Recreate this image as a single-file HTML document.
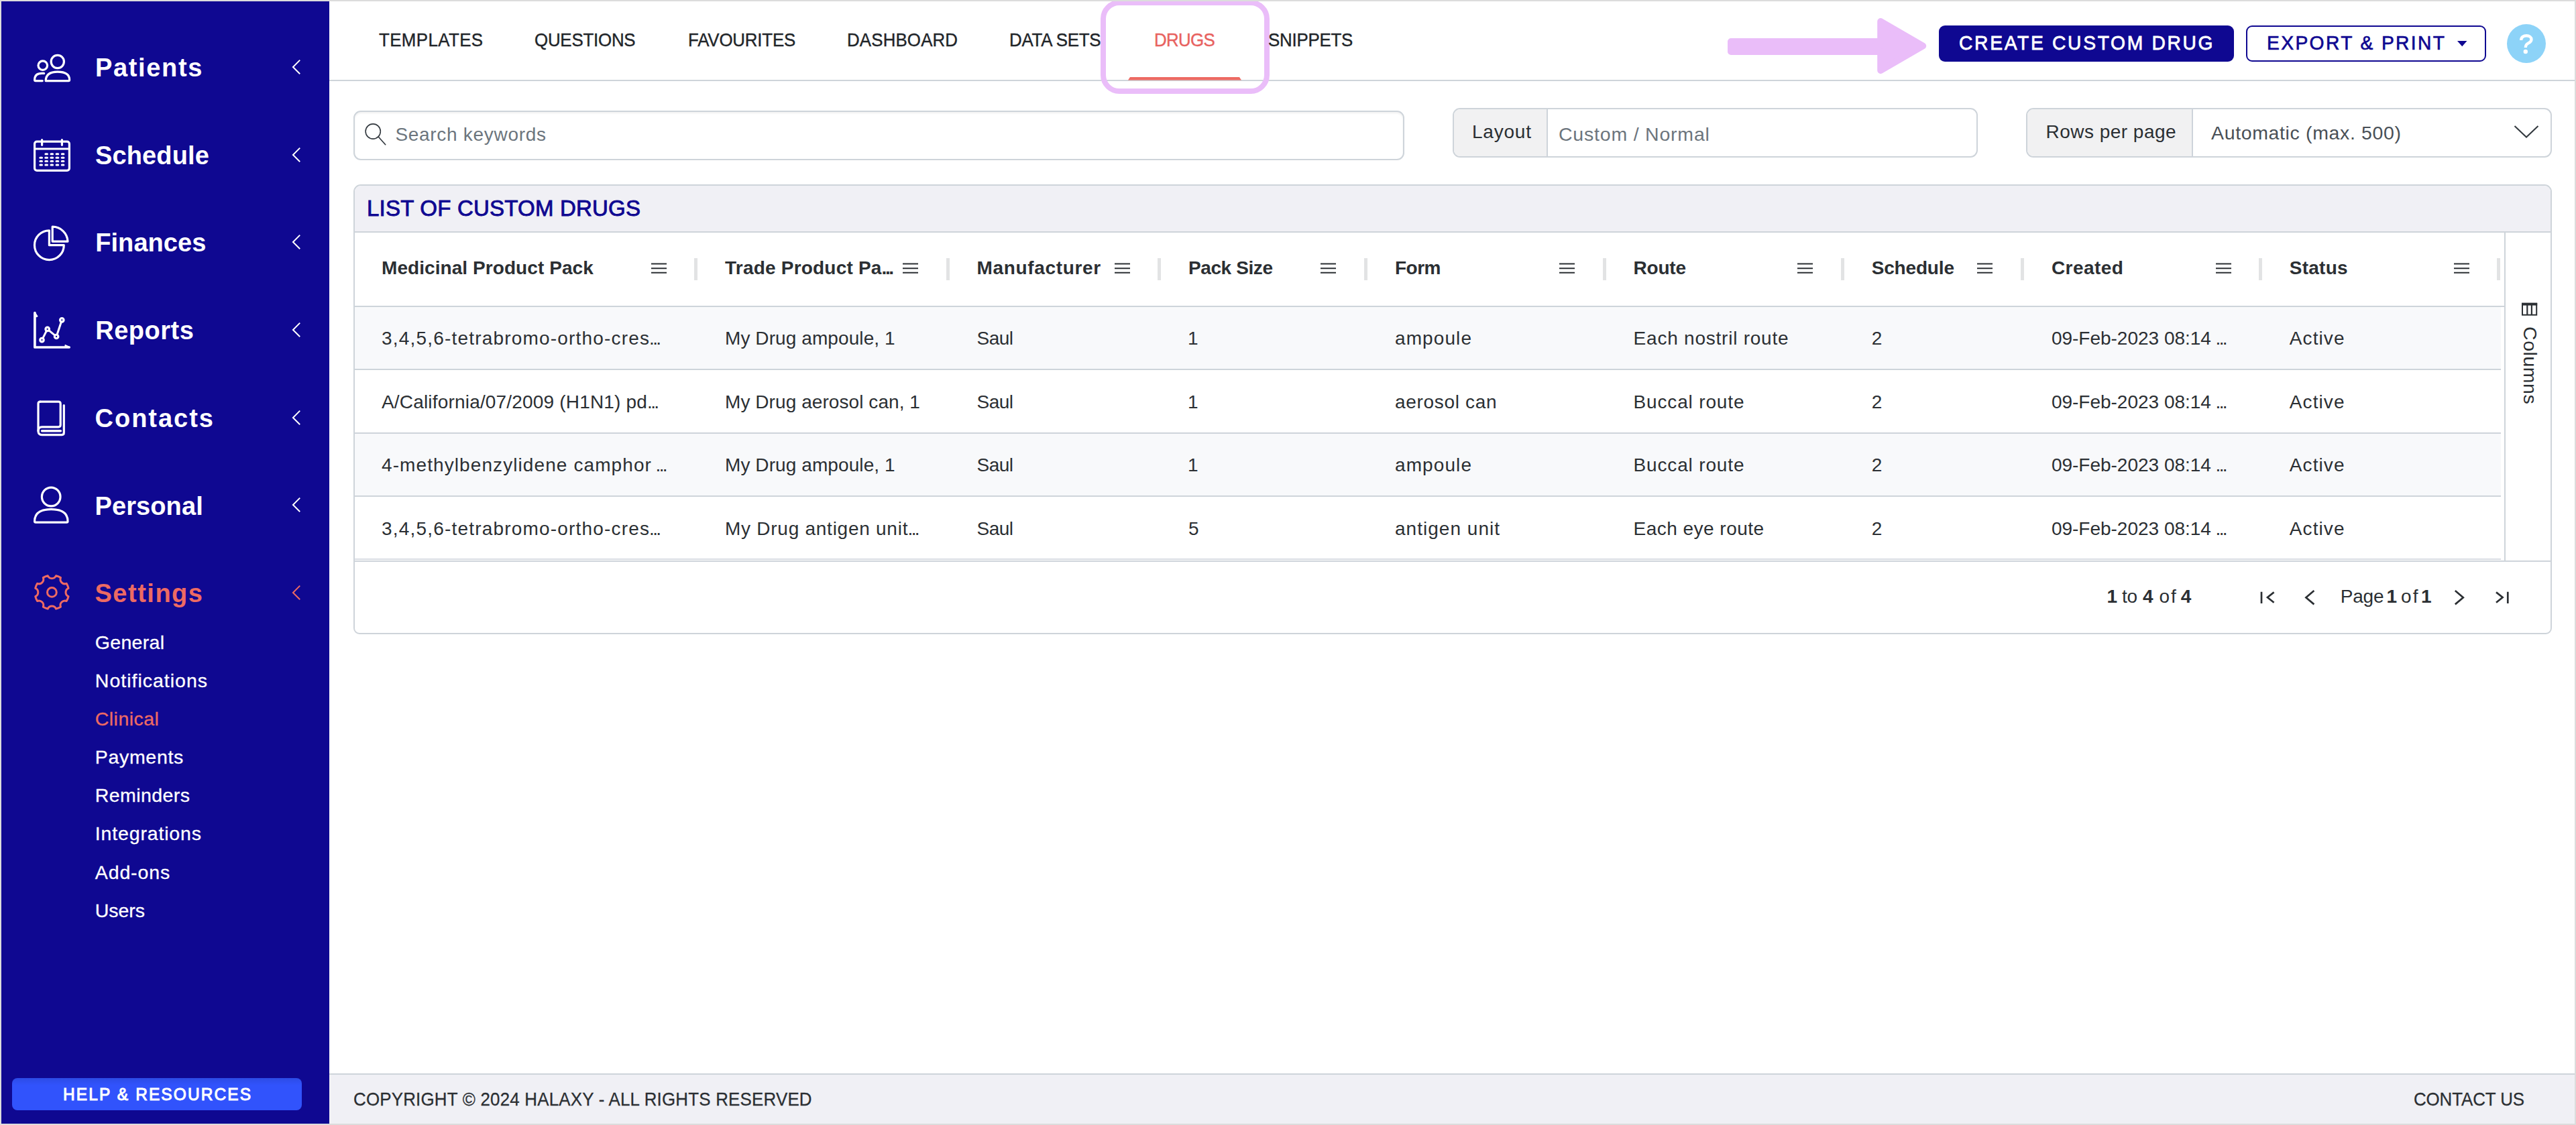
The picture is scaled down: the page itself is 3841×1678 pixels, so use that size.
<!DOCTYPE html>
<html><head><meta charset="utf-8"><title>Custom Drugs</title><style>html,body{margin:0;padding:0}body{width:3841px;height:1678px;position:relative;overflow:hidden;background:#fff;font-family:"Liberation Sans",sans-serif}
.b{position:absolute;display:block}.t{position:absolute;white-space:pre;font-family:"Liberation Sans",sans-serif}</style></head><body>
<div class="b" style="left:0px;top:0px;width:491px;height:1678px;background:#0f0891"></div>
<div class="b" style="left:491px;top:119px;width:3350px;height:2px;background:#ced4da"></div>
<div class="b" style="left:1682px;top:115px;width:169px;height:4.5px;background:#ed6a63;clip-path:polygon(3px 0,166px 0,169px 100%,0 100%)"></div>
<div class="b" style="left:491px;top:1601px;width:3350px;height:77px;background:#f0f0f5;border-top:2px solid #ced4da;box-sizing:border-box"></div>
<div class="b" style="left:527px;top:165px;width:1567px;height:74px;border:2px solid #ced4da;border-radius:11px;box-sizing:border-box;background:#fff;box-shadow:inset 0 2px 3px rgba(0,0,0,0.06)"></div>
<svg class="b" style="left:540px;top:180px;" width="40" height="40" viewBox="0 0 40 40"><g transform="translate(-540,-180)"><circle cx="556.2" cy="196" r="11.1" fill="none" stroke="#343a40" stroke-width="1.6"/><path d="M564.2 204 L574.7 215.7" stroke="#343a40" stroke-width="1.7" stroke-linecap="round"/></g></svg>
<div class="b" style="left:2166px;top:161px;width:783px;height:74px;border:2px solid #ced4da;border-radius:11px;box-sizing:border-box;background:#fff;overflow:hidden"></div>
<div class="b" style="left:2168px;top:163px;width:140px;height:70px;background:#f1f1f2;border-right:2px solid #ced4da;border-radius:9px 0 0 9px;box-sizing:border-box"></div>
<div class="b" style="left:3021px;top:161px;width:784px;height:74px;border:2px solid #ced4da;border-radius:11px;box-sizing:border-box;background:#fff"></div>
<div class="b" style="left:3023px;top:163px;width:247px;height:70px;background:#f1f1f2;border-right:2px solid #ced4da;border-radius:9px 0 0 9px;box-sizing:border-box"></div>
<svg class="b" style="left:3745px;top:184px;" width="44" height="26" viewBox="0 0 44 26"><path d="M4.5 4 L22 20.5 L39.5 4" fill="none" stroke="#343a40" stroke-width="2.1" stroke-linecap="butt" stroke-linejoin="miter"/></svg>
<div class="b" style="left:527px;top:275px;width:3278px;height:671px;border:2px solid #ced4da;border-radius:11px 11px 9px 9px;box-sizing:border-box;background:#fff"></div>
<div class="b" style="left:529px;top:277px;width:3274px;height:68px;background:#f0f0f5;border-radius:9px 9px 0 0"></div>
<div class="b" style="left:529px;top:345px;width:3274px;height:2px;background:#ced4da"></div>
<div class="b" style="left:529px;top:456.5px;width:3200px;height:94.5px;background:#f8f9fb"></div>
<div class="b" style="left:529px;top:645.5px;width:3200px;height:94.5px;background:#f8f9fb"></div>
<div class="b" style="left:529px;top:455.5px;width:3205px;height:2px;background:#ced4da"></div>
<div class="b" style="left:529px;top:550px;width:3200px;height:2px;background:#ced4da"></div>
<div class="b" style="left:529px;top:644.5px;width:3200px;height:2px;background:#ced4da"></div>
<div class="b" style="left:529px;top:739px;width:3200px;height:2px;background:#ced4da"></div>
<div class="b" style="left:529px;top:833px;width:3200px;height:2px;background:#d9dde3"></div>
<div class="b" style="left:529px;top:835.7px;width:3274px;height:2px;background:#ced4da"></div>
<div class="b" style="left:1035px;top:385px;width:5px;height:33px;background:#e2e3e4"></div>
<div class="b" style="left:1411px;top:385px;width:5px;height:33px;background:#e2e3e4"></div>
<div class="b" style="left:1726px;top:385px;width:5px;height:33px;background:#e2e3e4"></div>
<div class="b" style="left:2034px;top:385px;width:5px;height:33px;background:#e2e3e4"></div>
<div class="b" style="left:2390px;top:385px;width:5px;height:33px;background:#e2e3e4"></div>
<div class="b" style="left:2745px;top:385px;width:5px;height:33px;background:#e2e3e4"></div>
<div class="b" style="left:3013px;top:385px;width:5px;height:33px;background:#e2e3e4"></div>
<div class="b" style="left:3368px;top:385px;width:5px;height:33px;background:#e2e3e4"></div>
<div class="b" style="left:3723px;top:385px;width:5px;height:33px;background:#e2e3e4"></div>
<svg class="b" style="left:970.9px;top:391px;" width="23" height="18" viewBox="0 0 23 18"><path d="M0 2.6H23M0 9.2H23M0 15.8H23" stroke="#2b2f33" stroke-width="2"/></svg>
<svg class="b" style="left:1346px;top:391px;" width="23" height="18" viewBox="0 0 23 18"><path d="M0 2.6H23M0 9.2H23M0 15.8H23" stroke="#2b2f33" stroke-width="2"/></svg>
<svg class="b" style="left:1661.5px;top:391px;" width="23" height="18" viewBox="0 0 23 18"><path d="M0 2.6H23M0 9.2H23M0 15.8H23" stroke="#2b2f33" stroke-width="2"/></svg>
<svg class="b" style="left:1969px;top:391px;" width="23" height="18" viewBox="0 0 23 18"><path d="M0 2.6H23M0 9.2H23M0 15.8H23" stroke="#2b2f33" stroke-width="2"/></svg>
<svg class="b" style="left:2325px;top:391px;" width="23" height="18" viewBox="0 0 23 18"><path d="M0 2.6H23M0 9.2H23M0 15.8H23" stroke="#2b2f33" stroke-width="2"/></svg>
<svg class="b" style="left:2680px;top:391px;" width="23" height="18" viewBox="0 0 23 18"><path d="M0 2.6H23M0 9.2H23M0 15.8H23" stroke="#2b2f33" stroke-width="2"/></svg>
<svg class="b" style="left:2948px;top:391px;" width="23" height="18" viewBox="0 0 23 18"><path d="M0 2.6H23M0 9.2H23M0 15.8H23" stroke="#2b2f33" stroke-width="2"/></svg>
<svg class="b" style="left:3303.7px;top:391px;" width="23" height="18" viewBox="0 0 23 18"><path d="M0 2.6H23M0 9.2H23M0 15.8H23" stroke="#2b2f33" stroke-width="2"/></svg>
<svg class="b" style="left:3659px;top:391px;" width="23" height="18" viewBox="0 0 23 18"><path d="M0 2.6H23M0 9.2H23M0 15.8H23" stroke="#2b2f33" stroke-width="2"/></svg>
<div class="b" style="left:3734px;top:347px;width:2px;height:490px;background:#ced4da"></div>
<svg class="b" style="left:3758px;top:449px;" width="28" height="24" viewBox="0 0 28 24"><rect x="3" y="4.2" width="21.2" height="16.5" fill="none" stroke="#2b2f33" stroke-width="2"/><path d="M2 4.6H25.2" stroke="#2b2f33" stroke-width="4"/><path d="M10.3 4V21M16.9 4V21" stroke="#2b2f33" stroke-width="2.2"/></svg>
<div class="t" style="left:3772.6px;top:486.5px;font-size:28.5px;line-height:28.5px;color:#2b2f33;transform-origin:0 0;transform:rotate(90deg) translate(0,-50%);letter-spacing:0.55px">Columns</div>
<svg class="b" style="left:3360px;top:870px;" width="400" height="44" viewBox="0 0 400 44"><g transform="translate(-3360,-870)"><path d="M3372 882.7V900M3390.6 883.4L3381 891L3390.6 898.8" fill="none" stroke="#2b2f33" stroke-width="2.7" stroke-linecap="butt" stroke-linejoin="miter"/><path d="M3450.4 881L3438.4 891.2L3450.4 901.4" fill="none" stroke="#2b2f33" stroke-width="2.7" stroke-linecap="butt" stroke-linejoin="miter"/><path d="M3660.8 881L3672.8 891.2L3660.8 901.4" fill="none" stroke="#2b2f33" stroke-width="2.7" stroke-linecap="butt" stroke-linejoin="miter"/><path d="M3722 883.4L3731.6 891L3722 898.8M3739.3 882.7V900" fill="none" stroke="#2b2f33" stroke-width="2.7" stroke-linecap="butt" stroke-linejoin="miter"/></g></svg>
<div class="b" style="left:2891px;top:38px;width:440px;height:54px;background:#0f0891;border-radius:9px"></div>
<div class="b" style="left:3349px;top:38px;width:358px;height:54px;border:2.5px solid #0f0891;border-radius:9px;box-sizing:border-box;background:#fff"></div>
<svg class="b" style="left:3664px;top:60.6px;" width="14.4" height="9" viewBox="0 0 14.4 9"><path d="M0 0H14.4L7.2 8.2Z" fill="#0f0891"/></svg>
<div class="b" style="left:3737.5px;top:36px;width:58px;height:58px;background:#8dd3f8;border-radius:50%"></div>
<svg class="b" style="left:3745px;top:40px;" width="44" height="50" viewBox="0 0 44 50"><g transform="translate(-3745,-40)"><path d="M3759.2 60C3759.2 55.2 3762.8 53.3 3767.2 53.3C3771.8 53.3 3774.5 55.7 3774.5 58.7C3774.5 61.4 3772.8 62.9 3770 64.4C3767 66 3765.8 67.2 3765.8 71" fill="none" stroke="#fff" stroke-width="4.4"/><circle cx="3765.8" cy="77" r="3.2" fill="#fff"/></g></svg>
<div class="b" style="left:1641px;top:0px;width:252px;height:140px;border:8px solid #eabdf9;border-radius:28px;box-sizing:border-box"></div>
<svg class="b" style="left:2560px;top:10px;" width="330" height="120" viewBox="0 0 330 120"><path transform="translate(-2560,-10)" d="M2581 62H2804.2V32L2867.2 68.5L2804.2 105V77H2581Z" fill="#eabdf9" stroke="#eabdf9" stroke-width="10" stroke-linejoin="round"/></svg>
<div class="b" style="left:18px;top:1608px;width:432px;height:48px;background:linear-gradient(#2c4be6,#3153fc 22%);border-radius:8px"></div>
<svg class="b" style="left:0px;top:0px;" width="140" height="940" viewBox="0 0 140 940"><circle cx="85.8" cy="92" r="9.6" fill="none" stroke="#fff" stroke-width="3.2" stroke-linecap="round" stroke-linejoin="round"/><path d="M68.2 120.6 Q68.2 107.1 85.9 107.1 Q103.6 107.1 103.6 119 Q103.6 120.6 102 120.6 Z" fill="none" stroke="#fff" stroke-width="3.2" stroke-linecap="round" stroke-linejoin="round"/><circle cx="63.8" cy="97.6" r="6.8" fill="none" stroke="#fff" stroke-width="3.2" stroke-linecap="round" stroke-linejoin="round"/><path d="M65.6 109.4 H62.5 Q51.6 109.4 51.6 119.2 Q51.6 120.6 53 120.6 H63.2" fill="none" stroke="#fff" stroke-width="3.2" stroke-linecap="round" stroke-linejoin="round"/><rect x="51.6" y="211.1" width="51.8" height="43.2" rx="3.4" fill="none" stroke="#fff" stroke-width="3.2" stroke-linecap="round" stroke-linejoin="round"/><path d="M51.6 222H103.4M62.6 208.5V216.3M92.4 208.5V216.3" fill="none" stroke="#fff" stroke-width="3.2" stroke-linecap="round" stroke-linejoin="round"/><rect x="66.4" y="228.3" width="5.6" height="3" rx="1.5" fill="#fff"/><rect x="74.5" y="228.3" width="5.6" height="3" rx="1.5" fill="#fff"/><rect x="82.6" y="228.3" width="5.6" height="3" rx="1.5" fill="#fff"/><rect x="90.8" y="228.3" width="5.6" height="3" rx="1.5" fill="#fff"/><rect x="58.4" y="233.8" width="5.6" height="3" rx="1.5" fill="#fff"/><rect x="66.4" y="233.8" width="5.6" height="3" rx="1.5" fill="#fff"/><rect x="74.5" y="233.8" width="5.6" height="3" rx="1.5" fill="#fff"/><rect x="82.6" y="233.8" width="5.6" height="3" rx="1.5" fill="#fff"/><rect x="90.8" y="233.8" width="5.6" height="3" rx="1.5" fill="#fff"/><rect x="58.4" y="239.1" width="5.6" height="3" rx="1.5" fill="#fff"/><rect x="66.4" y="239.1" width="5.6" height="3" rx="1.5" fill="#fff"/><rect x="74.5" y="239.1" width="5.6" height="3" rx="1.5" fill="#fff"/><rect x="82.6" y="239.1" width="5.6" height="3" rx="1.5" fill="#fff"/><rect x="90.8" y="239.1" width="5.6" height="3" rx="1.5" fill="#fff"/><rect x="58.4" y="244.5" width="5.6" height="3" rx="1.5" fill="#fff"/><rect x="66.4" y="244.5" width="5.6" height="3" rx="1.5" fill="#fff"/><rect x="74.5" y="244.5" width="5.6" height="3" rx="1.5" fill="#fff"/><rect x="82.6" y="244.5" width="5.6" height="3" rx="1.5" fill="#fff"/><rect x="90.8" y="244.5" width="5.6" height="3" rx="1.5" fill="#fff"/><path d="M73.4 343.8 A21.9 21.9 0 1 0 95.3 365.7 H73.4 Z" fill="none" stroke="#fff" stroke-width="3.2" stroke-linecap="round" stroke-linejoin="round"/><path d="M78.2 338.2 A22.8 22.8 0 0 1 101 360.1 H78.2 Z" fill="none" stroke="#fff" stroke-width="3.2" stroke-linecap="round" stroke-linejoin="round"/><path d="M51.9 466.5V518H103" fill="none" stroke="#fff" stroke-width="3.7" stroke-linecap="round" stroke-linejoin="round"/><path d="M52 465.3L56.2 472L53.5 473Z M97 514.3L104.8 517.8L97 517Z" fill="#fff" stroke="#fff" stroke-width="1" stroke-linejoin="round"/><circle cx="62.5" cy="507.1" r="2.75" fill="none" stroke="#fff" stroke-width="3.2" stroke-linecap="round" stroke-linejoin="round"/><circle cx="70.7" cy="490.9" r="2.75" fill="none" stroke="#fff" stroke-width="3.2" stroke-linecap="round" stroke-linejoin="round"/><circle cx="84.1" cy="502" r="2.75" fill="none" stroke="#fff" stroke-width="3.2" stroke-linecap="round" stroke-linejoin="round"/><circle cx="92.3" cy="477.3" r="2.75" fill="none" stroke="#fff" stroke-width="3.2" stroke-linecap="round" stroke-linejoin="round"/><path d="M64.04 504.07L69.16 493.93" fill="none" stroke="#fff" stroke-width="3" stroke-linecap="butt"/><path d="M73.32 493.07L81.48 499.83" fill="none" stroke="#fff" stroke-width="3" stroke-linecap="butt"/><path d="M85.17 498.77L91.23 480.53" fill="none" stroke="#fff" stroke-width="3" stroke-linecap="butt"/><path d="M60 599.2H87.2Q90.2 599.2 90.2 602.2V633.8Q90.2 636.8 87.2 636.8H62.5Q57 636.8 57 642.7Q57 648.6 62.5 648.6H92.3Q95.3 648.6 95.3 645.6V604.5" fill="none" stroke="#fff" stroke-width="3.2" stroke-linecap="round" stroke-linejoin="round"/><path d="M57 642.7V602.2Q57 599.2 60 599.2" fill="none" stroke="#fff" stroke-width="3.2" stroke-linecap="round" stroke-linejoin="round"/><path d="M62.6 642.7H90.4" fill="none" stroke="#fff" stroke-width="3.4" stroke-linecap="round"/><circle cx="76.2" cy="741" r="13.8" fill="none" stroke="#fff" stroke-width="3.2" stroke-linecap="round" stroke-linejoin="round"/><path d="M51.6 777.6 Q51.6 759.6 76.3 759.6 Q101 759.6 101 777.6 Q101 779.2 99.4 779.2 H53.2 Q51.6 779.2 51.6 777.6Z" fill="none" stroke="#fff" stroke-width="3.2" stroke-linecap="round" stroke-linejoin="round"/><path d="M102.05 877.26 A6.7 6.7 0 0 0 102.05 889.54 A25.4 25.4 0 0 1 99.17 896.48 A6.7 6.7 0 0 0 90.48 905.17 A25.4 25.4 0 0 1 83.54 908.05 A6.7 6.7 0 0 0 71.26 908.05 A25.4 25.4 0 0 1 64.32 905.17 A6.7 6.7 0 0 0 55.63 896.48 A25.4 25.4 0 0 1 52.75 889.54 A6.7 6.7 0 0 0 52.75 877.26 A25.4 25.4 0 0 1 55.63 870.32 A6.7 6.7 0 0 0 64.32 861.63 A25.4 25.4 0 0 1 71.26 858.75 A6.7 6.7 0 0 0 83.54 858.75 A25.4 25.4 0 0 1 90.48 861.63 A6.7 6.7 0 0 0 99.17 870.32 A25.4 25.4 0 0 1 102.05 877.26 Z" fill="none" stroke="#ed6a63" stroke-width="3" stroke-linecap="round" stroke-linejoin="round"/><circle cx="77.4" cy="883.4" r="6.9" fill="none" stroke="#ed6a63" stroke-width="3" stroke-linecap="round" stroke-linejoin="round"/></svg>
<svg class="b" style="left:432px;top:86px;" width="20" height="28" viewBox="0 0 20 28"><path d="M15.2 3.6L4.9 14L15.2 24.3" fill="none" stroke="#fff" stroke-width="2" stroke-linecap="butt" stroke-linejoin="miter"/></svg>
<svg class="b" style="left:432px;top:216.7px;" width="20" height="28" viewBox="0 0 20 28"><path d="M15.2 3.6L4.9 14L15.2 24.3" fill="none" stroke="#fff" stroke-width="2" stroke-linecap="butt" stroke-linejoin="miter"/></svg>
<svg class="b" style="left:432px;top:347.3px;" width="20" height="28" viewBox="0 0 20 28"><path d="M15.2 3.6L4.9 14L15.2 24.3" fill="none" stroke="#fff" stroke-width="2" stroke-linecap="butt" stroke-linejoin="miter"/></svg>
<svg class="b" style="left:432px;top:478px;" width="20" height="28" viewBox="0 0 20 28"><path d="M15.2 3.6L4.9 14L15.2 24.3" fill="none" stroke="#fff" stroke-width="2" stroke-linecap="butt" stroke-linejoin="miter"/></svg>
<svg class="b" style="left:432px;top:608.5px;" width="20" height="28" viewBox="0 0 20 28"><path d="M15.2 3.6L4.9 14L15.2 24.3" fill="none" stroke="#fff" stroke-width="2" stroke-linecap="butt" stroke-linejoin="miter"/></svg>
<svg class="b" style="left:432px;top:739.3px;" width="20" height="28" viewBox="0 0 20 28"><path d="M15.2 3.6L4.9 14L15.2 24.3" fill="none" stroke="#fff" stroke-width="2" stroke-linecap="butt" stroke-linejoin="miter"/></svg>
<svg class="b" style="left:432px;top:870px;" width="20" height="28" viewBox="0 0 20 28"><path d="M15.2 3.6L4.9 14L15.2 24.3" fill="none" stroke="#ed6a63" stroke-width="2" stroke-linecap="butt" stroke-linejoin="miter"/></svg>
<div class="b" style="left:0px;top:0px;width:3841px;height:1678px;border:2px solid #dcdcdc;box-sizing:border-box"></div>
<span class="t" style="left:141.9px;top:81.8px;font-size:38px;line-height:38px;font-weight:700;color:#ffffff;letter-spacing:1.67px;">Patients</span>
<span class="t" style="left:141.9px;top:212.5px;font-size:38px;line-height:38px;font-weight:700;color:#ffffff;letter-spacing:0.15px;">Schedule</span>
<span class="t" style="left:142.2px;top:343.1px;font-size:38px;line-height:38px;font-weight:700;color:#ffffff;letter-spacing:0.07px;">Finances</span>
<span class="t" style="left:142.2px;top:474.1px;font-size:38px;line-height:38px;font-weight:700;color:#ffffff;letter-spacing:0.52px;">Reports</span>
<span class="t" style="left:141.5px;top:604.5px;font-size:38px;line-height:38px;font-weight:700;color:#ffffff;letter-spacing:1.99px;">Contacts</span>
<span class="t" style="left:141.5px;top:735.5px;font-size:38px;line-height:38px;font-weight:700;color:#ffffff;letter-spacing:0.10px;">Personal</span>
<span class="t" style="left:141.5px;top:866.0px;font-size:38px;line-height:38px;font-weight:700;color:#ed6a63;letter-spacing:1.51px;">Settings</span>
<span class="t" style="left:141.8px;top:943.9px;font-size:28.5px;line-height:28.5px;font-weight:400;color:#ffffff;letter-spacing:0.30px;-webkit-text-stroke:0.3px #ffffff;">General</span>
<span class="t" style="left:141.8px;top:1001.0px;font-size:28.5px;line-height:28.5px;font-weight:400;color:#ffffff;letter-spacing:1.00px;-webkit-text-stroke:0.3px #ffffff;">Notifications</span>
<span class="t" style="left:141.8px;top:1058.1px;font-size:28.5px;line-height:28.5px;font-weight:400;color:#ed6a63;letter-spacing:0.45px;-webkit-text-stroke:0.3px #ed6a63;">Clinical</span>
<span class="t" style="left:141.8px;top:1115.2px;font-size:28.5px;line-height:28.5px;font-weight:400;color:#ffffff;letter-spacing:0.68px;-webkit-text-stroke:0.3px #ffffff;">Payments</span>
<span class="t" style="left:141.8px;top:1172.3px;font-size:28.5px;line-height:28.5px;font-weight:400;color:#ffffff;letter-spacing:0.43px;-webkit-text-stroke:0.3px #ffffff;">Reminders</span>
<span class="t" style="left:141.8px;top:1229.4px;font-size:28.5px;line-height:28.5px;font-weight:400;color:#ffffff;letter-spacing:0.84px;-webkit-text-stroke:0.3px #ffffff;">Integrations</span>
<span class="t" style="left:141.8px;top:1286.5px;font-size:28.5px;line-height:28.5px;font-weight:400;color:#ffffff;letter-spacing:0.87px;-webkit-text-stroke:0.3px #ffffff;">Add-ons</span>
<span class="t" style="left:141.8px;top:1343.6px;font-size:28.5px;line-height:28.5px;font-weight:400;color:#ffffff;letter-spacing:-0.06px;-webkit-text-stroke:0.3px #ffffff;">Users</span>
<span class="t" style="left:93.5px;top:1619.7px;font-size:25.5px;line-height:25.5px;font-weight:400;color:#ffffff;letter-spacing:2.19px;-webkit-text-stroke:1.05px #fff;transform-origin:0 0;transform:scaleX(0.96);">HELP &amp; RESOURCES</span>
<span class="t" style="left:565.0px;top:45.7px;font-size:27.5px;line-height:27.5px;font-weight:400;color:#212529;letter-spacing:0.43px;-webkit-text-stroke:0.4px #212529;transform-origin:0 0;transform:scaleX(0.94);">TEMPLATES</span>
<span class="t" style="left:797.4px;top:45.7px;font-size:27.5px;line-height:27.5px;font-weight:400;color:#212529;letter-spacing:-0.22px;-webkit-text-stroke:0.4px #212529;transform-origin:0 0;transform:scaleX(0.94);">QUESTIONS</span>
<span class="t" style="left:1025.5px;top:45.7px;font-size:27.5px;line-height:27.5px;font-weight:400;color:#212529;letter-spacing:-0.19px;-webkit-text-stroke:0.4px #212529;transform-origin:0 0;transform:scaleX(0.94);">FAVOURITES</span>
<span class="t" style="left:1263.0px;top:45.7px;font-size:27.5px;line-height:27.5px;font-weight:400;color:#212529;letter-spacing:0.17px;-webkit-text-stroke:0.4px #212529;transform-origin:0 0;transform:scaleX(0.94);">DASHBOARD</span>
<span class="t" style="left:1505.0px;top:45.7px;font-size:27.5px;line-height:27.5px;font-weight:400;color:#212529;letter-spacing:-0.24px;-webkit-text-stroke:0.4px #212529;transform-origin:0 0;transform:scaleX(0.94);">DATA SETS</span>
<span class="t" style="left:1890.7px;top:45.7px;font-size:27.5px;line-height:27.5px;font-weight:400;color:#212529;letter-spacing:-0.24px;-webkit-text-stroke:0.4px #212529;transform-origin:0 0;transform:scaleX(0.94);">SNIPPETS</span>
<span class="t" style="left:1721.3px;top:45.7px;font-size:27.5px;line-height:27.5px;font-weight:400;color:#e8625f;letter-spacing:-0.71px;-webkit-text-stroke:0.4px #e8625f;transform-origin:0 0;transform:scaleX(0.94);">DRUGS</span>
<span class="t" style="left:2921.0px;top:49.1px;font-size:30px;line-height:30px;font-weight:400;color:#ffffff;letter-spacing:2.87px;-webkit-text-stroke:0.8px #fff;transform-origin:0 0;transform:scaleX(0.94);">CREATE CUSTOM DRUG</span>
<span class="t" style="left:3380.0px;top:49.1px;font-size:30px;line-height:30px;font-weight:400;color:#0f0891;letter-spacing:2.54px;-webkit-text-stroke:0.7px #0f0891;transform-origin:0 0;transform:scaleX(0.94);">EXPORT &amp; PRINT</span>
<span class="t" style="left:589.4px;top:187.3px;font-size:28px;line-height:28px;font-weight:400;color:#6c757d;letter-spacing:0.70px;">Search keywords</span>
<span class="t" style="left:2195.0px;top:182.6px;font-size:28px;line-height:28px;font-weight:400;color:#2b2f33;letter-spacing:0.78px;">Layout</span>
<span class="t" style="left:2324.0px;top:185.9px;font-size:28.5px;line-height:28.5px;font-weight:400;color:#6c757d;letter-spacing:0.79px;">Custom / Normal</span>
<span class="t" style="left:3050.5px;top:183.3px;font-size:28px;line-height:28px;font-weight:400;color:#2b2f33;letter-spacing:0.48px;">Rows per page</span>
<span class="t" style="left:3297.0px;top:184.3px;font-size:28.5px;line-height:28.5px;font-weight:400;color:#495057;letter-spacing:0.64px;">Automatic (max. 500)</span>
<span class="t" style="left:547.0px;top:294.3px;font-size:33px;line-height:33px;font-weight:400;color:#0f0891;letter-spacing:0.21px;-webkit-text-stroke:0.9px #0f0891;">LIST OF CUSTOM DRUGS</span>
<span class="t" style="left:569.0px;top:386.3px;font-size:28px;line-height:28px;font-weight:700;color:#2b2f33;letter-spacing:0.07px;">Medicinal Product Pack</span>
<span class="t" style="left:1081.0px;top:386.3px;font-size:28px;line-height:28px;font-weight:700;color:#2b2f33;letter-spacing:0.21px;">Trade Product Pa</span>
<span class="t" style="left:1314.5px;top:386.3px;font-size:28px;line-height:28px;font-weight:700;color:#2b2f33;letter-spacing:-2.40px;">...</span>
<span class="t" style="left:1456.5px;top:386.3px;font-size:28px;line-height:28px;font-weight:700;color:#2b2f33;letter-spacing:0.67px;">Manufacturer</span>
<span class="t" style="left:1772.0px;top:386.3px;font-size:28px;line-height:28px;font-weight:700;color:#2b2f33;letter-spacing:-0.40px;">Pack Size</span>
<span class="t" style="left:2080.0px;top:386.3px;font-size:28px;line-height:28px;font-weight:700;color:#2b2f33;letter-spacing:-0.50px;">Form</span>
<span class="t" style="left:2435.6px;top:386.3px;font-size:28px;line-height:28px;font-weight:700;color:#2b2f33;letter-spacing:-0.23px;">Route</span>
<span class="t" style="left:2790.7px;top:386.3px;font-size:28px;line-height:28px;font-weight:700;color:#2b2f33;letter-spacing:-0.17px;">Schedule</span>
<span class="t" style="left:3058.9px;top:386.3px;font-size:28px;line-height:28px;font-weight:700;color:#2b2f33;letter-spacing:0.47px;">Created</span>
<span class="t" style="left:3413.8px;top:386.3px;font-size:28px;line-height:28px;font-weight:700;color:#2b2f33;letter-spacing:0.24px;">Status</span>
<span class="t" style="left:569.0px;top:490.9px;font-size:28px;line-height:28px;font-weight:400;color:#2b2f33;letter-spacing:1.19px;">3,4,5,6-tetrabromo-ortho-cres</span>
<span class="t" style="left:968.0px;top:490.9px;font-size:28px;line-height:28px;font-weight:400;color:#2b2f33;letter-spacing:-2.60px;">...</span>
<span class="t" style="left:1081.0px;top:490.9px;font-size:28px;line-height:28px;font-weight:400;color:#2b2f33;letter-spacing:0.09px;">My Drug ampoule, 1</span>
<span class="t" style="left:1456.5px;top:490.9px;font-size:28px;line-height:28px;font-weight:400;color:#2b2f33;letter-spacing:-0.52px;">Saul</span>
<span class="t" style="left:1771.0px;top:490.9px;font-size:28px;line-height:28px;font-weight:400;color:#2b2f33;letter-spacing:0.00px;">1</span>
<span class="t" style="left:2080.0px;top:490.9px;font-size:28px;line-height:28px;font-weight:400;color:#2b2f33;letter-spacing:1.10px;">ampoule</span>
<span class="t" style="left:2435.6px;top:490.9px;font-size:28px;line-height:28px;font-weight:400;color:#2b2f33;letter-spacing:0.77px;">Each nostril route</span>
<span class="t" style="left:2790.7px;top:490.9px;font-size:28px;line-height:28px;font-weight:400;color:#2b2f33;letter-spacing:0.00px;">2</span>
<span class="t" style="left:3058.9px;top:490.9px;font-size:28px;line-height:28px;font-weight:400;color:#2b2f33;letter-spacing:-0.01px;">09-Feb-2023 08:14</span>
<span class="t" style="left:3303.5px;top:490.9px;font-size:28px;line-height:28px;font-weight:400;color:#2b2f33;letter-spacing:-2.60px;">...</span>
<span class="t" style="left:3413.8px;top:490.9px;font-size:28px;line-height:28px;font-weight:400;color:#2b2f33;letter-spacing:1.09px;">Active</span>
<span class="t" style="left:569.0px;top:585.6px;font-size:28px;line-height:28px;font-weight:400;color:#2b2f33;letter-spacing:0.18px;">A/California/07/2009 (H1N1) pd</span>
<span class="t" style="left:965.0px;top:585.6px;font-size:28px;line-height:28px;font-weight:400;color:#2b2f33;letter-spacing:-2.60px;">...</span>
<span class="t" style="left:1081.0px;top:585.6px;font-size:28px;line-height:28px;font-weight:400;color:#2b2f33;letter-spacing:0.07px;">My Drug aerosol can, 1</span>
<span class="t" style="left:1456.5px;top:585.6px;font-size:28px;line-height:28px;font-weight:400;color:#2b2f33;letter-spacing:-0.52px;">Saul</span>
<span class="t" style="left:1771.0px;top:585.6px;font-size:28px;line-height:28px;font-weight:400;color:#2b2f33;letter-spacing:0.00px;">1</span>
<span class="t" style="left:2080.0px;top:585.6px;font-size:28px;line-height:28px;font-weight:400;color:#2b2f33;letter-spacing:0.67px;">aerosol can</span>
<span class="t" style="left:2435.6px;top:585.6px;font-size:28px;line-height:28px;font-weight:400;color:#2b2f33;letter-spacing:0.84px;">Buccal route</span>
<span class="t" style="left:2790.7px;top:585.6px;font-size:28px;line-height:28px;font-weight:400;color:#2b2f33;letter-spacing:0.00px;">2</span>
<span class="t" style="left:3058.9px;top:585.6px;font-size:28px;line-height:28px;font-weight:400;color:#2b2f33;letter-spacing:-0.01px;">09-Feb-2023 08:14</span>
<span class="t" style="left:3303.5px;top:585.6px;font-size:28px;line-height:28px;font-weight:400;color:#2b2f33;letter-spacing:-2.60px;">...</span>
<span class="t" style="left:3413.8px;top:585.6px;font-size:28px;line-height:28px;font-weight:400;color:#2b2f33;letter-spacing:1.09px;">Active</span>
<span class="t" style="left:569.0px;top:680.3px;font-size:28px;line-height:28px;font-weight:400;color:#2b2f33;letter-spacing:1.09px;">4-methylbenzylidene camphor</span>
<span class="t" style="left:977.5px;top:680.3px;font-size:28px;line-height:28px;font-weight:400;color:#2b2f33;letter-spacing:-2.60px;">...</span>
<span class="t" style="left:1081.0px;top:680.3px;font-size:28px;line-height:28px;font-weight:400;color:#2b2f33;letter-spacing:0.09px;">My Drug ampoule, 1</span>
<span class="t" style="left:1456.5px;top:680.3px;font-size:28px;line-height:28px;font-weight:400;color:#2b2f33;letter-spacing:-0.52px;">Saul</span>
<span class="t" style="left:1771.0px;top:680.3px;font-size:28px;line-height:28px;font-weight:400;color:#2b2f33;letter-spacing:0.00px;">1</span>
<span class="t" style="left:2080.0px;top:680.3px;font-size:28px;line-height:28px;font-weight:400;color:#2b2f33;letter-spacing:1.10px;">ampoule</span>
<span class="t" style="left:2435.6px;top:680.3px;font-size:28px;line-height:28px;font-weight:400;color:#2b2f33;letter-spacing:0.84px;">Buccal route</span>
<span class="t" style="left:2790.7px;top:680.3px;font-size:28px;line-height:28px;font-weight:400;color:#2b2f33;letter-spacing:0.00px;">2</span>
<span class="t" style="left:3058.9px;top:680.3px;font-size:28px;line-height:28px;font-weight:400;color:#2b2f33;letter-spacing:-0.01px;">09-Feb-2023 08:14</span>
<span class="t" style="left:3303.5px;top:680.3px;font-size:28px;line-height:28px;font-weight:400;color:#2b2f33;letter-spacing:-2.60px;">...</span>
<span class="t" style="left:3413.8px;top:680.3px;font-size:28px;line-height:28px;font-weight:400;color:#2b2f33;letter-spacing:1.09px;">Active</span>
<span class="t" style="left:569.0px;top:775.0px;font-size:28px;line-height:28px;font-weight:400;color:#2b2f33;letter-spacing:1.19px;">3,4,5,6-tetrabromo-ortho-cres</span>
<span class="t" style="left:968.0px;top:775.0px;font-size:28px;line-height:28px;font-weight:400;color:#2b2f33;letter-spacing:-2.60px;">...</span>
<span class="t" style="left:1081.0px;top:775.0px;font-size:28px;line-height:28px;font-weight:400;color:#2b2f33;letter-spacing:0.74px;">My Drug antigen unit</span>
<span class="t" style="left:1353.5px;top:775.0px;font-size:28px;line-height:28px;font-weight:400;color:#2b2f33;letter-spacing:-2.60px;">...</span>
<span class="t" style="left:1456.5px;top:775.0px;font-size:28px;line-height:28px;font-weight:400;color:#2b2f33;letter-spacing:-0.52px;">Saul</span>
<span class="t" style="left:1772.0px;top:775.0px;font-size:28px;line-height:28px;font-weight:400;color:#2b2f33;letter-spacing:0.00px;">5</span>
<span class="t" style="left:2080.0px;top:775.0px;font-size:28px;line-height:28px;font-weight:400;color:#2b2f33;letter-spacing:1.02px;">antigen unit</span>
<span class="t" style="left:2435.6px;top:775.0px;font-size:28px;line-height:28px;font-weight:400;color:#2b2f33;letter-spacing:0.47px;">Each eye route</span>
<span class="t" style="left:2790.7px;top:775.0px;font-size:28px;line-height:28px;font-weight:400;color:#2b2f33;letter-spacing:0.00px;">2</span>
<span class="t" style="left:3058.9px;top:775.0px;font-size:28px;line-height:28px;font-weight:400;color:#2b2f33;letter-spacing:-0.01px;">09-Feb-2023 08:14</span>
<span class="t" style="left:3303.5px;top:775.0px;font-size:28px;line-height:28px;font-weight:400;color:#2b2f33;letter-spacing:-2.60px;">...</span>
<span class="t" style="left:3413.8px;top:775.0px;font-size:28px;line-height:28px;font-weight:400;color:#2b2f33;letter-spacing:1.09px;">Active</span>
<span class="t" style="left:3141.5px;top:876.3px;font-size:28px;line-height:28px;font-weight:700;color:#2b2f33;letter-spacing:0.00px;">1</span>
<span class="t" style="left:3163.9px;top:876.3px;font-size:28px;line-height:28px;font-weight:400;color:#2b2f33;letter-spacing:-0.06px;">to</span>
<span class="t" style="left:3195.0px;top:876.3px;font-size:28px;line-height:28px;font-weight:700;color:#2b2f33;letter-spacing:0.00px;">4</span>
<span class="t" style="left:3219.4px;top:876.3px;font-size:28px;line-height:28px;font-weight:400;color:#2b2f33;letter-spacing:1.94px;">of</span>
<span class="t" style="left:3251.7px;top:876.3px;font-size:28px;line-height:28px;font-weight:700;color:#2b2f33;letter-spacing:0.00px;">4</span>
<span class="t" style="left:3489.8px;top:876.3px;font-size:28px;line-height:28px;font-weight:400;color:#2b2f33;letter-spacing:-0.24px;">Page</span>
<span class="t" style="left:3558.5px;top:876.3px;font-size:28px;line-height:28px;font-weight:700;color:#2b2f33;letter-spacing:0.00px;">1</span>
<span class="t" style="left:3579.9px;top:876.3px;font-size:28px;line-height:28px;font-weight:400;color:#2b2f33;letter-spacing:2.24px;">of</span>
<span class="t" style="left:3610.0px;top:876.3px;font-size:28px;line-height:28px;font-weight:700;color:#2b2f33;letter-spacing:0.00px;">1</span>
<span class="t" style="left:527.0px;top:1626.4px;font-size:27.5px;line-height:27.5px;font-weight:400;color:#2b2f33;letter-spacing:0.25px;-webkit-text-stroke:0.3px #2b2f33;transform-origin:0 0;transform:scaleX(0.94);">COPYRIGHT © 2024 HALAXY - ALL RIGHTS RESERVED</span>
<span class="t" style="left:3599.0px;top:1625.9px;font-size:27.5px;line-height:27.5px;font-weight:400;color:#2b2f33;letter-spacing:-0.08px;-webkit-text-stroke:0.3px #2b2f33;transform-origin:0 0;transform:scaleX(0.94);">CONTACT US</span>
</body></html>
